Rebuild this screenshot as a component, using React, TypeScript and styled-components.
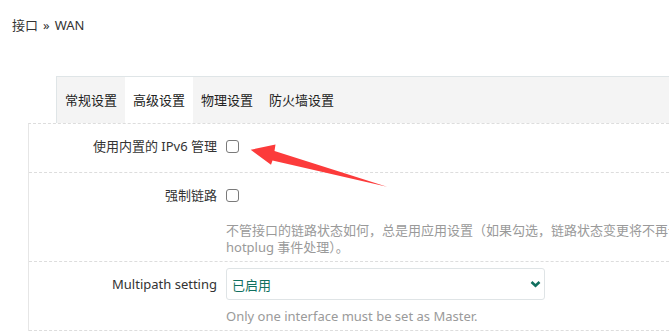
import React from "react";
import styled, { createGlobalStyle } from "styled-components";

const GlobalStyle = createGlobalStyle`
  html, body {
    margin: 0;
    padding: 0;
    background: #ffffff;
    overflow: hidden;
  }
  body {
    font-family: "Noto Sans", "Noto Sans CJK SC", sans-serif;
    font-size: 13px;
    color: #333333;
  }
`;

const Page = styled.div`
  position: relative;
  width: 669px;
  height: 333px;
  padding: 16px 0 0 12px;
  box-sizing: border-box;
  overflow: hidden;
`;

const Breadcrumb = styled.div`
  line-height: 18px;
  color: #333333;
  font-size: 13px;
`;

const Sep = styled.span`
  margin: 0 5px;
`;

const Section = styled.div`
  margin-top: 42px;
`;

const TabBar = styled.div`
  display: flex;
  margin-left: 44px;
  height: 46px;
  background: #f4f4f4;
  border-top: 1px solid #dfe5e7;
  border-left: 1px solid #dfe5e7;
`;

const Tab = styled.div<{ $active?: boolean }>`
  padding: 0 8px;
  line-height: 46px;
  color: #222222;
  background: ${(p) => (p.$active ? "#ffffff" : "transparent")};
  white-space: nowrap;
`;

const Panel = styled.div`
  margin-left: 16px;
  border-top: 1px dashed #dddddd;
  border-left: 1px solid #e6e6e6;
`;

const Row = styled.div`
  display: grid;
  grid-template-columns: 188px 1fr;
  column-gap: 9px;
  padding: 6px 0 10px;
  border-bottom: 1px dashed #dddddd;
`;

const Label = styled.div`
  line-height: 32px;
  text-align: right;
  color: #333333;
  white-space: nowrap;
`;

const Field = styled.div`
  height: 32px;
  display: flex;
  align-items: center;
`;

const Checkbox = styled.input.attrs({ type: "checkbox" })`
  appearance: none;
  -webkit-appearance: none;
  margin: 0;
  width: 13px;
  height: 13px;
  border: 1px solid #7a7a7a;
  border-radius: 3px;
  box-sizing: border-box;
  background: #ffffff;
`;

const Select = styled.div`
  width: 319px;
  height: 32px;
  box-sizing: border-box;
  border: 1px solid #dfe4e6;
  border-radius: 3px;
  display: flex;
  align-items: center;
  padding: 0 3px 0 5px;
  color: #11705f;
`;

const Chevron = styled.svg`
  margin-left: auto;
`;

const Description = styled.div<{ $gap: number }>`
  grid-column: 2;
  margin-top: ${(p) => p.$gap}px;
  margin-bottom: -5px;
  line-height: 17px;
  color: #9a9a9a;
  width: 480px;
`;

const Arrow = styled.svg`
  position: absolute;
  left: 0;
  top: 0;
  pointer-events: none;
`;

export default function App() {
  return (
    <>
      <GlobalStyle />
      <Page>
        <Breadcrumb>
          接口<Sep>»</Sep>WAN
        </Breadcrumb>
        <Section>
          <TabBar>
            <Tab>常规设置</Tab>
            <Tab $active>高级设置</Tab>
            <Tab>物理设置</Tab>
            <Tab>防火墙设置</Tab>
          </TabBar>
          <Panel>
            <Row>
              <Label>使用内置的 IPv6 管理</Label>
              <Field>
                <Checkbox />
              </Field>
            </Row>
            <Row>
              <Label>强制链路</Label>
              <Field>
                <Checkbox />
              </Field>
              <Description $gap={11}>
                不管接口的链路状态如何，总是用应用设置（如果勾选，链路状态变更将不再调用 hotplug 事件处理）。
              </Description>
            </Row>
            <Row>
              <Label>Multipath setting</Label>
              <Field>
                <Select>
                  <span>已启用</span>
                  <Chevron width="11" height="8" viewBox="0 0 11 8">
                    <path d="M1.5 2 L5.5 5.8 L9.5 2" fill="none" stroke="#11705f" strokeWidth="2.6" />
                  </Chevron>
                </Select>
              </Field>
              <Description $gap={8}>Only one interface must be set as Master.</Description>
            </Row>
          </Panel>
        </Section>
        <Arrow width="669" height="333" viewBox="0 0 669 333">
          <polygon
            points="250.7,149.8 275.5,144.6 274.5,151 387,186.8 272.5,160.5 271,164.8"
            fill="#fc3b3b"
          />
        </Arrow>
      </Page>
    </>
  );
}
